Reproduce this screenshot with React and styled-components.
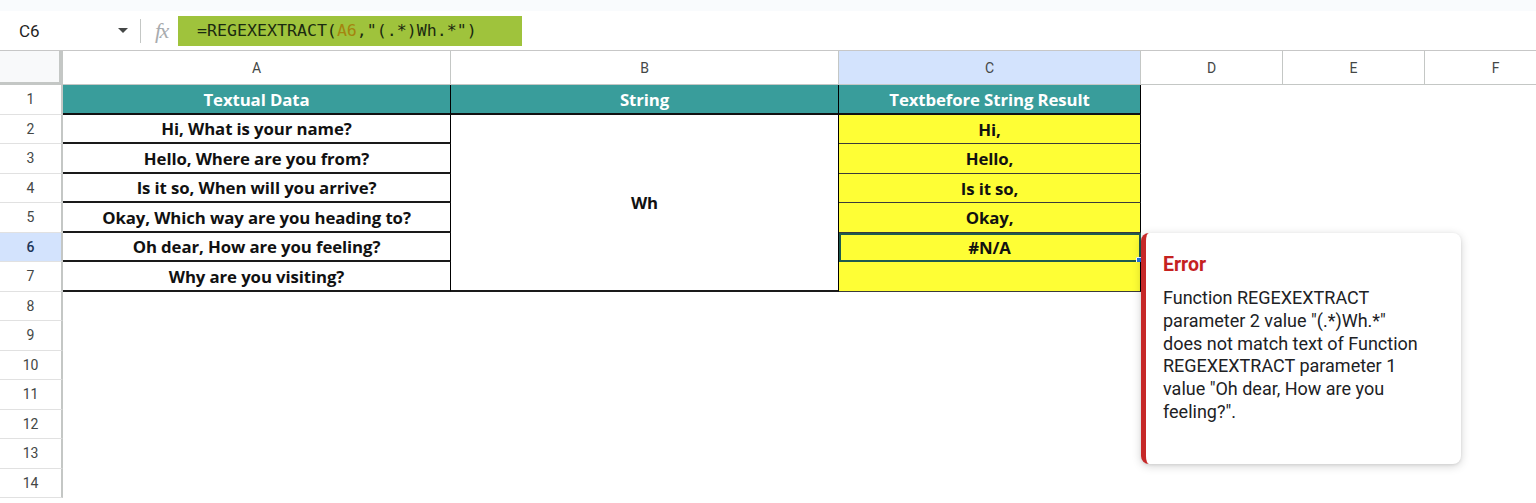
import React from 'react';
import styled, { createGlobalStyle } from 'styled-components';

const GlobalStyle = createGlobalStyle`
  html, body {
    margin: 0;
    padding: 0;
    background: #fff;
    overflow: hidden;
    font-family: Roboto, "Liberation Sans", sans-serif;
  }
`;

const COLS = ['A', 'B', 'C', 'D', 'E', 'F'];

const rows = [
  { a: 'Hi, What is your name?', c: 'Hi,' },
  { a: 'Hello, Where are you from?', c: 'Hello,' },
  { a: 'Is it so, When will you arrive?', c: 'Is it so,' },
  { a: 'Okay, Which way are you heading to?', c: 'Okay,' },
  { a: 'Oh dear, How are you feeling?', c: '#N/A', selected: true },
  { a: 'Why are you visiting?', c: '' },
];

const Page = styled.div`
  display: flex;
  flex-direction: column;
  width: 1536px;
  height: 503px;
  overflow: hidden;
`;

const TopStrip = styled.div`
  height: 11px;
  background: #f9fbfd;
`;

const FormulaBar = styled.div`
  height: 39px;
  display: flex;
  align-items: center;
  border-bottom: 1px solid #c7c7c7;
  background: #fff;
`;

const NameBox = styled.div`
  width: 140px;
  display: flex;
  align-items: center;
  justify-content: space-between;
  padding: 0 12px 0 19px;
  box-sizing: border-box;
  font-size: 17px;
  color: #1f1f1f;
`;

const Caret = styled.span`
  width: 0;
  height: 0;
  border-left: 5px solid transparent;
  border-right: 5px solid transparent;
  border-top: 5px solid #444746;
`;

const Divider = styled.span`
  width: 1px;
  height: 24px;
  background: #c4c7c5;
`;

const FxIcon = styled.span`
  width: 17px;
  margin: 0 6px 0 14px;
  font-family: "Liberation Serif", serif;
  font-style: italic;
  font-size: 22px;
  color: #a8abae;
  letter-spacing: -1.5px;
  line-height: 1;
`;

const FormulaBox = styled.div`
  height: 30px;
  width: 344px;
  background: #9fc33c;
  display: flex;
  align-items: center;
  padding-left: 19px;
  box-sizing: border-box;
  font-family: "DejaVu Sans Mono", "Liberation Mono", monospace;
  font-size: 16.6px;
  color: #1b2a10;
  white-space: pre;
`;

const Ref = styled.span`
  color: #a4850f;
`;

const Sheet = styled.div`
  position: relative;
  flex: 1;
`;

const Grid = styled.div`
  display: grid;
  grid-template-columns: 63px 388px 388px 302px 142px 142px 142px;
  grid-template-rows: 34px repeat(14, 29.5px);
`;

const Corner = styled.div`
  background: #f8f9fa;
  border-right: 4px solid #c4c7c5;
  border-bottom: 3px solid #c4c7c5;
  box-sizing: border-box;
`;

const ColHead = styled.div`
  display: flex;
  align-items: center;
  justify-content: center;
  font-size: 14px;
  color: #444746;
  background: ${p => (p.$active ? '#d3e3fd' : '#fff')};
  border-right: 1px solid #c4c7c5;
  border-bottom: 1px solid #c4c7c5;
  box-sizing: border-box;
`;

const RowHead = styled.div`
  display: flex;
  align-items: center;
  justify-content: center;
  font-size: 14px;
  color: ${p => (p.$active ? '#1d3557' : '#444746')};
  font-weight: ${p => (p.$active ? 500 : 400)};
  background: ${p => (p.$active ? '#d3e3fd' : '#fff')};
  border-right: 2px solid #c4c7c5;
  border-bottom: 1px solid #e1e1e1;
  box-sizing: border-box;
`;

const Cell = styled.div`
  position: relative;
  display: flex;
  align-items: center;
  justify-content: center;
  padding-top: 1px;
  box-sizing: border-box;
  font-family: "Open Sans", Lato, sans-serif;
  font-weight: 700;
  font-size: 16.8px;
  letter-spacing: -0.1px;
  color: #111;
  white-space: nowrap;
`;

const HeadCell = styled(Cell)`
  background: #399d9b;
  color: #fff;
  border-right: 1px solid #000;
  border-bottom: 2px solid #111;
`;

const TextCell = styled(Cell)`
  background: #fff;
  border-right: 1px solid #000;
  border-bottom: 2px solid #1a1a1a;
`;

const MergedCell = styled(TextCell)`
  grid-row: span 6;
`;

const ResultCell = styled(Cell)`
  background: #fefe35;
  border-right: 1px solid #000;
  border-bottom: 1px solid #3a3a3a;
  outline: ${p => (p.$selected ? '2px solid #1f5a4e' : 'none')};
  outline-offset: -2px;
`;

const Handle = styled.span`
  position: absolute;
  right: -4px;
  bottom: -4px;
  width: 6px;
  height: 6px;
  background: #1a73e8;
  border: 1px solid #fff;
  border-radius: 1px;
`;

const Blank = styled.div``;

const Tooltip = styled.div`
  position: absolute;
  left: 1141px;
  top: 182px;
  width: 320px;
  height: 231px;
  box-sizing: border-box;
  background: #fff;
  border-left: 5px solid #c62828;
  border-radius: 8px;
  box-shadow: 0 2px 10px rgba(0, 0, 0, 0.18), 0 1px 3px rgba(0, 0, 0, 0.08);
  padding: 20px 18px 0 17px;
  z-index: 2;
`;

const TipTitle = styled.div`
  font-weight: 700;
  font-size: 19.5px;
  color: #c5221f;
  margin-bottom: 11px;
`;

const TipBody = styled.div`
  font-size: 18px;
  line-height: 22.8px;
  color: #202124;
`;

export default function App() {
  return (
    <Page>
      <GlobalStyle />
      <TopStrip />
      <FormulaBar>
        <NameBox>
          C6
          <Caret />
        </NameBox>
        <Divider />
        <FxIcon>fx</FxIcon>
        <FormulaBox>
          =REGEXEXTRACT(<Ref>A6</Ref>,"(.*)Wh.*")
        </FormulaBox>
      </FormulaBar>

      <Sheet>
        <Grid>
          <Corner />
          {COLS.map(c => (
            <ColHead key={c} $active={c === 'C'}>{c}</ColHead>
          ))}

          <RowHead>1</RowHead>
          <HeadCell>Textual Data</HeadCell>
          <HeadCell>String</HeadCell>
          <HeadCell>Textbefore String Result</HeadCell>
          <Blank />
          <Blank />
          <Blank />

          {rows.map((r, i) => (
            <React.Fragment key={i}>
              <RowHead $active={r.selected}>{i + 2}</RowHead>
              <TextCell>{r.a}</TextCell>
              {i === 0 && <MergedCell>Wh</MergedCell>}
              <ResultCell $selected={r.selected}>
                {r.c}
                {r.selected && <Handle />}
              </ResultCell>
              <Blank />
              <Blank />
              <Blank />
            </React.Fragment>
          ))}

          {[8, 9, 10, 11, 12, 13, 14].map(n => (
            <React.Fragment key={n}>
              <RowHead>{n}</RowHead>
              <Blank />
              <Blank />
              <Blank />
              <Blank />
              <Blank />
              <Blank />
            </React.Fragment>
          ))}
        </Grid>

        <Tooltip>
          <TipTitle>Error</TipTitle>
          <TipBody>
            Function REGEXEXTRACT
            <br />
            parameter 2 value "(.*)Wh.*"
            <br />
            does not match text of Function
            <br />
            REGEXEXTRACT parameter 1
            <br />
            value "Oh dear, How are you
            <br />
            feeling?".
          </TipBody>
        </Tooltip>
      </Sheet>
    </Page>
  );
}
